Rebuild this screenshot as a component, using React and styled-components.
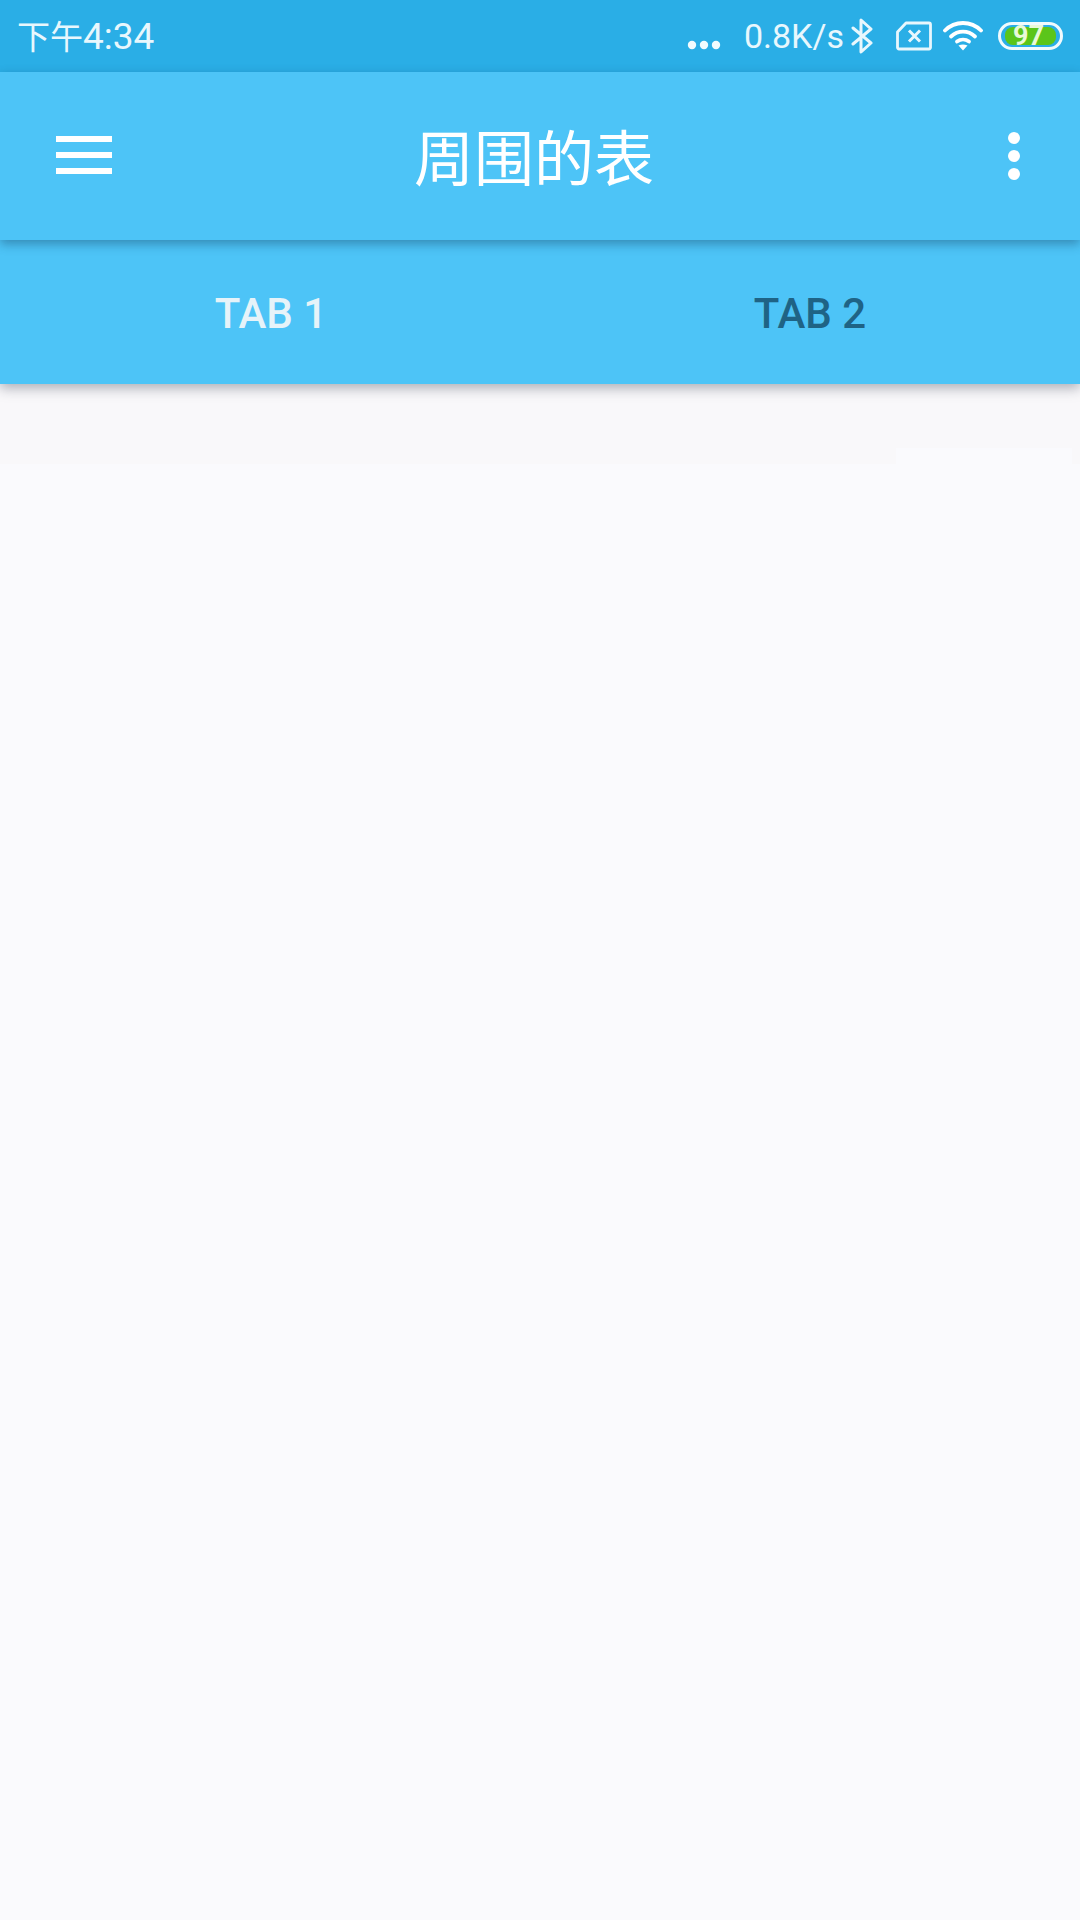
import React from "react"
import styled, { createGlobalStyle } from "styled-components"

const GlobalStyle = createGlobalStyle`
  html, body {
    margin: 0;
    padding: 0;
    background: #fafafd;
  }
  #root {
    height: 1920px;
  }
`

const Page = styled.div`
  width: 1080px;
  height: 1920px;
  display: flex;
  flex-direction: column;
  overflow: hidden;
  font-family: Roboto, "Noto Sans CJK SC", sans-serif;
  background: #fafafd;
`

const StatusBar = styled.div`
  height: 72px;
  flex: none;
  display: flex;
  align-items: center;
  justify-content: space-between;
  padding: 0 17px 0 17px;
  box-sizing: border-box;
  background: #2aaee6;
  color: #e8f7fd;
`

const Time = styled.div`
  font-family: "Noto Sans CJK SC", sans-serif;
  font-size: 33px;
  line-height: 72px;
  margin-top: -1px;
  span {
    font-family: Roboto, sans-serif;
    font-size: 37px;
  }
`

const StatusRight = styled.div`
  display: flex;
  align-items: center;
`

const Speed = styled.div`
  font-size: 34px;
  line-height: 72px;
  margin: 0 7px 0 23px;
`

const AppBar = styled.header`
  height: 168px;
  flex: none;
  position: relative;
  z-index: 2;
  display: flex;
  align-items: center;
  justify-content: space-between;
  padding: 0 60px 0 56px;
  box-sizing: border-box;
  background: #4dc4f7;
  box-shadow: 0 4px 10px rgba(20, 60, 90, 0.42);
`

const Burger = styled.div`
  width: 56px;
  display: flex;
  flex-direction: column;
  gap: 10px;
  margin-top: -2px;
  i {
    display: block;
    height: 6px;
    background: #fff;
  }
`

const Title = styled.h1`
  margin: -2px 52px 0 0;
  font-family: "Noto Sans CJK SC", sans-serif;
  font-weight: 400;
  font-size: 60px;
  line-height: 1;
  color: #fff;
`

const MoreDots = styled.div`
  display: flex;
  flex-direction: column;
  gap: 6px;
  i {
    display: block;
    width: 12px;
    height: 12px;
    border-radius: 50%;
    background: #fff;
  }
`

const TabBar = styled.nav`
  height: 144px;
  flex: none;
  position: relative;
  z-index: 1;
  display: grid;
  grid-template-columns: 1fr 1fr;
  background: #4dc4f7;
  box-shadow: 0 4px 12px rgba(30, 40, 60, 0.36);
`

const Tab = styled.div`
  display: flex;
  align-items: center;
  justify-content: center;
  font-size: 42px;
  font-weight: 500;
  padding-top: 2px;
  color: ${p => (p.$active ? "#1f6385" : "#e6f3f9")};
  padding-left: ${p => (p.$active ? "0" : "2px")};
`

const Content = styled.main`
  flex: 1;
  display: flex;
  align-items: flex-start;
`

const Band = styled.div`
  height: ${p => p.$height}px;
  flex: ${p => (p.$grow ? 1 : "none")};
  width: ${p => (p.$width ? `${p.$width}px` : "auto")};
  background: #f9f8fa;
`

const Bluetooth = () => (
  <svg width="22" height="36" viewBox="0 0 22 36" fill="none" stroke="#e8f7fd" strokeWidth="3" strokeLinejoin="round" strokeLinecap="round">
    <path d="M2 10 20 25 10 34V2l10 9L2 26" />
  </svg>
)

const SimOff = () => (
  <svg width="36" height="30" viewBox="0 0 36 30" fill="none" stroke="#e8f7fd" strokeLinejoin="round">
    <path d="M10 2h23a1.500 1.500 0 0 1 1.500 1.500v23A1.500 1.500 0 0 1 33 28H3a1.500 1.500 0 0 1-1.500-1.500V11z" strokeWidth="2.800" />
    <path d="M13 9.500l11 11M24 9.500l-11 11" strokeWidth="3" />
  </svg>
)

const Wifi = () => (
  <svg width="40" height="30" viewBox="0 0 40 30" fill="none" stroke="#ffffff" strokeWidth="3.800" strokeLinecap="round">
    <path d="M2 9.500C12-.5 28-.5 38 9.500" />
    <path d="M8 15.500C15 9 25 9 32 15.500" />
    <path d="M14 20.500c3.500-2.600 8.500-2.600 12 0" />
    <path d="M20 29.500l-4.500-5c3-1.500 6-1.500 9 0z" fill="#ffffff" stroke="none" />
  </svg>
)

const Battery = styled.div`
  width: 65px;
  height: 28px;
  box-sizing: border-box;
  margin-left: 15px;
  padding: 2px 4px;
  border: 3px solid #f0fafd;
  border-radius: 14px;
  display: flex;
`

const BatteryFill = styled.div`
  flex: 1;
  border-radius: 8px;
  background: #5bc51a;
  color: #e9f9d8;
  font-size: 27px;
  font-weight: 700;
  line-height: 18px;
  text-align: center;
  padding-right: 4px;
`

const DotsIcon = () => (
  <svg width="34" height="10" viewBox="0 0 34 10" fill="#f2fbfe" style={{ marginTop: 18 }}>
    <circle cx="5" cy="5" r="4.200" />
    <circle cx="17" cy="5" r="4.200" />
    <circle cx="29" cy="5" r="4.200" />
  </svg>
)

const IconSlot = styled.span`
  display: flex;
  margin-left: ${p => p.$gap}px;
`

export default function App() {
  return (
    <Page>
      <GlobalStyle />
      <StatusBar>
        <Time>下午<span>4:34</span></Time>
        <StatusRight>
          <DotsIcon />
          <Speed>0.8K/s</Speed>
          <Bluetooth />
          <IconSlot $gap={23}><SimOff /></IconSlot>
          <IconSlot $gap={11}><Wifi /></IconSlot>
          <Battery><BatteryFill>97</BatteryFill></Battery>
        </StatusRight>
      </StatusBar>
      <AppBar>
        <Burger><i /><i /><i /></Burger>
        <Title>周围的表</Title>
        <MoreDots><i /><i /><i /></MoreDots>
      </AppBar>
      <TabBar>
        <Tab>TAB 1</Tab>
        <Tab $active>TAB 2</Tab>
      </TabBar>
      <Content>
        <Band $width={896} $height={80} />
        <Band $width={176} $height={64} />
        <Band $grow $height={80} />
      </Content>
    </Page>
  )
}
